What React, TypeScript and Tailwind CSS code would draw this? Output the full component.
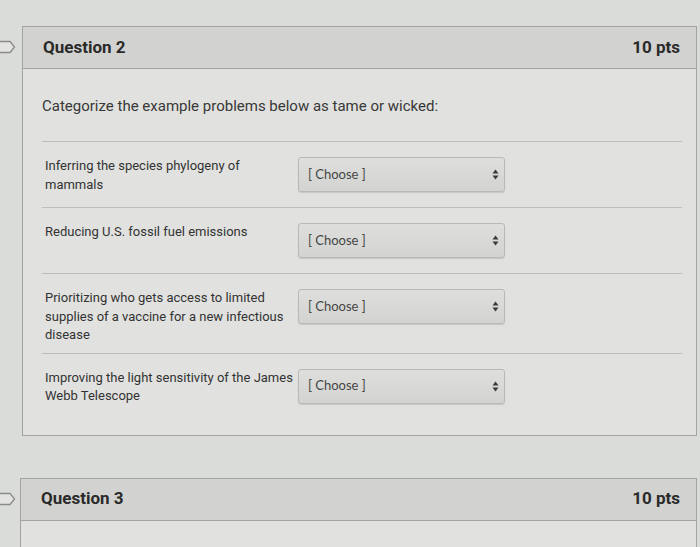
import React from "react";

const items = [
  { text: "Inferring the species phylogeny of mammals", pb: "pb-[13px]" },
  { text: "Reducing U.S. fossil fuel emissions", pb: "pb-[15px]" },
  { text: "Prioritizing who gets access to limited supplies of a vaccine for a new infectious disease", pb: "pb-[8px]" },
  { text: "Improving the light sensitivity of the James Webb Telescope", pb: "pb-[13px]" },
];

function Flag() {
  return (
    <svg width="16" height="14" viewBox="0 0 16 14" className="block">
      <path d="M-2 1.5 H10 L14.5 7 L10 12.5 H-2 Z" fill="#e4e5e2" stroke="#8a8b88" strokeWidth="1.3" />
    </svg>
  );
}

function SelectArrows() {
  return (
    <svg width="7" height="11" viewBox="0 0 7 11">
      <path d="M3.5 0.5 L6.5 4.5 H0.5 Z" fill="#3a3a3a" />
      <path d="M3.5 10.5 L6.5 6.5 H0.5 Z" fill="#3a3a3a" />
    </svg>
  );
}

function ChooseSelect() {
  return (
    <div className="w-[207px] h-[35px] shrink-0 flex items-center justify-between pl-[9px] pr-[5px] rounded-[3px] border border-[#b9bab7] bg-gradient-to-b from-[#dedfdc] to-[#d3d4d1] shadow-[0_1px_1px_rgba(0,0,0,0.12)]">
      <span className="text-[13px] text-[#454545]" style={{ fontFamily: "Lato, 'Liberation Sans', sans-serif" }}>
        [ Choose ]
      </span>
      <SelectArrows />
    </div>
  );
}

function QuestionHeader({ title }: { title: string }) {
  return (
    <div className="h-[42px] flex items-center justify-between pl-[20px] pr-[16px] bg-[#d2d3d0] border-b border-[#a3a4a1]">
      <span className="text-[17px] font-bold text-[#2a2a2a]">{title}</span>
      <span className="text-[17px] font-bold text-[#2a2a2a]">10 pts</span>
    </div>
  );
}

export default function App() {
  return (
    <div
      className="w-[700px] h-[547px] overflow-hidden bg-[#dadcd9] pt-[26px]"
      style={{ fontFamily: "Roboto, 'Liberation Sans', sans-serif" }}
    >
      <div className="flex">
        <div className="w-[22px] shrink-0 pt-[14px]">
          <Flag />
        </div>
        <div className="w-[675px] border border-[#a3a4a1] bg-[#e1e2df]">
          <QuestionHeader title="Question 2" />
          <div className="pl-[19px] pr-[14px] pt-[27px] pb-[16px]">
            <p className="text-[15px] leading-5 text-[#383838] mb-[25px]">
              Categorize the example problems below as tame or wicked:
            </p>
            <div className="border-t border-[#bdbebb]">
              {items.map((it, i) => (
                <div
                  key={i}
                  className={`flex items-start pt-[15px] ${it.pb} ${i < items.length - 1 ? "border-b border-[#bdbebb]" : ""}`}
                >
                  <p className="w-[256px] shrink-0 pl-[3px] text-[13px] leading-[18.5px] text-[#333333]">
                    {it.text}
                  </p>
                  <ChooseSelect />
                </div>
              ))}
            </div>
          </div>
        </div>
      </div>

      <div className="flex mt-[42px]">
        <div className="w-[20px] shrink-0 pt-[14px]">
          <Flag />
        </div>
        <div className="w-[677px] border border-[#a3a4a1] bg-[#e1e2df] h-[200px]">
          <QuestionHeader title="Question 3" />
        </div>
      </div>
    </div>
  );
}
